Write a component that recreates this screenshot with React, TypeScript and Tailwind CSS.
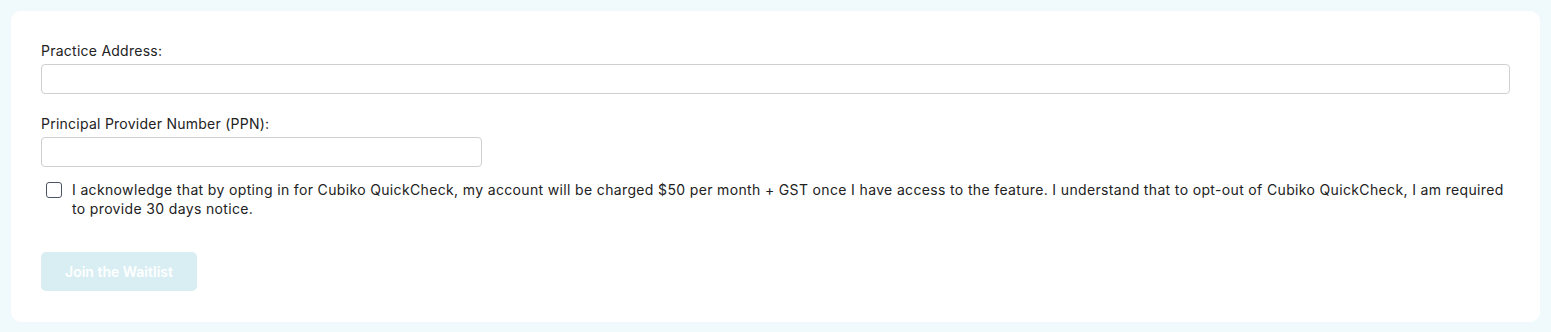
import { useState } from 'react';

const App = () => {
  const [address, setAddress] = useState('');
  const [ppn, setPpn] = useState('');
  const [agreed, setAgreed] = useState(false);

  return (
    <div className="min-h-[332px] bg-[#f0f9fb] p-[11px] pb-[10px] font-['Inter','Noto_Sans',sans-serif] text-[#222]">
      <div className="rounded-[10px] bg-white px-[30px] pt-[29px] pb-[31px]">
        <label className="block text-[14px] leading-[21px] tracking-[0.25px]">Practice Address:</label>
        <input
          value={address}
          onChange={(e) => setAddress(e.target.value)}
          className="mt-[3px] block h-[30px] w-full rounded-[4px] border border-[#cfcfcf] px-2 text-[14px] outline-none"
        />

        <label className="mt-[19px] block text-[14px] leading-[21px] tracking-[0.25px]">
          Principal Provider Number (PPN):
        </label>
        <input
          value={ppn}
          onChange={(e) => setPpn(e.target.value)}
          className="mt-[3px] block h-[30px] w-[441px] rounded-[4px] border border-[#cfcfcf] px-2 text-[14px] outline-none"
        />

        <label className="mt-[13px] flex items-start gap-[10px] pl-[5px]">
          <input
            type="checkbox"
            checked={agreed}
            onChange={(e) => setAgreed(e.target.checked)}
            className="mt-[2px] h-4 w-4 shrink-0 appearance-none rounded-[3px] border border-[#4b5563] bg-white"
          />
          <span className="text-[14px] leading-[19px] tracking-[0.35px]">
            I acknowledge that by opting in for Cubiko QuickCheck, my account will be charged $50 per month + GST once I
            have access to the feature. I understand that to opt-out of Cubiko QuickCheck, I am required to provide 30
            days notice.
          </span>
        </label>

        <button
          disabled={!agreed}
          className="mt-[34px] block h-[39px] w-[156px] rounded-[5px] bg-[#d9eef3] text-[14px] font-semibold text-white"
        >
          Join the Waitlist
        </button>
      </div>
    </div>
  );
};

export default App;
